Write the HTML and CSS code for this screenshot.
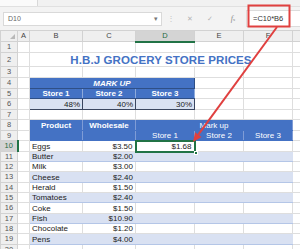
FILE: index.html
```html
<!DOCTYPE html>
<html>
<head>
<meta charset="utf-8">
<link rel="stylesheet" href="styles.css">
</head>
<body>
<div class="app">
  <div class="ribbon"><span class="rib-left"></span></div>
  <div class="fbar">
    <div class="namebox"><span>D10</span><span class="dd">&#9662;</span></div>
    <span class="sep">&#8942;</span>
    <span class="ic">&#10005;</span>
    <span class="ic">&#10003;</span>
    <span class="ic fx"><i>f</i><span class="fxx">x</span></span>
    <div class="finput">=C10*B6</div>
  </div>
  <table class="sheet">
    <colgroup>
      <col class="c-rh"><col class="c-a"><col class="c-b"><col class="c-c"><col class="c-d"><col class="c-e"><col class="c-f"><col class="c-g">
    </colgroup>
    <tr class="h11 colhdr"><th class="corner"><span class="tri"></span></th><th>A</th><th>B</th><th>C</th><th class="sel-col">D</th><th>E</th><th>F</th><th></th></tr>
    <tr class="h11"><th>1</th><td></td><td></td><td></td><td></td><td></td><td></td><td></td></tr>
    <tr class="h14"><th>2</th><td></td><td colspan="5" class="title">H.B.J GROCERY STORE PRICES</td><td></td></tr>
    <tr class="h11"><th>3</th><td></td><td></td><td></td><td></td><td></td><td></td><td></td></tr>
    <tr class="h11"><th>4</th><td></td><td colspan="3" class="mu-head">MARK UP</td><td></td><td></td><td></td></tr>
    <tr class="h10"><th>5</th><td></td><td class="mu-sub">Store 1</td><td class="mu-sub">Store 2</td><td class="mu-sub">Store 3</td><td></td><td></td><td></td></tr>
    <tr class="h11"><th>6</th><td></td><td class="mu-val">48%</td><td class="mu-val">40%</td><td class="mu-val">30%</td><td></td><td></td><td></td></tr>
    <tr class="h10"><th>7</th><td></td><td></td><td></td><td></td><td></td><td></td><td></td></tr>
    <tr class="h11"><th>8</th><td></td><td class="hd">Product</td><td class="hd">Wholesale</td><td colspan="3" class="hd hd-mk">Mark up</td><td></td></tr>
    <tr class="h10"><th>9</th><td></td><td class="hd"></td><td class="hd"></td><td class="hd hd2">Store 1</td><td class="hd hd2">Store 2</td><td class="hd hd2">Store 3</td><td></td></tr>
    <tr class="h11"><th class="sel-row">10</th><td></td><td class="p">Eggs</td><td class="n">$3.50</td><td class="n active"><div class="act">$1.68<span class="handle"></span></div></td><td></td><td></td><td></td></tr>
    <tr class="h10 band"><th>11</th><td></td><td class="p">Butter</td><td class="n">$2.00</td><td></td><td></td><td></td><td></td></tr>
    <tr class="h10"><th>12</th><td></td><td class="p">Milk</td><td class="n">$3.00</td><td></td><td></td><td></td><td></td></tr>
    <tr class="h11 band"><th>13</th><td></td><td class="p">Cheese</td><td class="n">$2.40</td><td></td><td></td><td></td><td></td></tr>
    <tr class="h10"><th>14</th><td></td><td class="p">Herald</td><td class="n">$1.50</td><td></td><td></td><td></td><td></td></tr>
    <tr class="h10 band"><th>15</th><td></td><td class="p">Tomatoes</td><td class="n">$2.40</td><td></td><td></td><td></td><td></td></tr>
    <tr class="h11"><th>16</th><td></td><td class="p">Coke</td><td class="n">$1.50</td><td></td><td></td><td></td><td></td></tr>
    <tr class="h10 band"><th>17</th><td></td><td class="p">Fish</td><td class="n">$10.90</td><td></td><td></td><td></td><td></td></tr>
    <tr class="h10"><th>18</th><td></td><td class="p">Chocolate</td><td class="n">$1.20</td><td></td><td></td><td></td><td></td></tr>
    <tr class="h11 band"><th>19</th><td></td><td class="p">Pens</td><td class="n">$4.00</td><td></td><td></td><td></td><td></td></tr>
    <tr class="h11"><th>20</th><td></td><td></td><td></td><td></td><td></td><td></td><td></td></tr>
  </table>
</div>
<svg class="overlay" width="300" height="249" viewBox="0 0 300 249">
  <rect x="248.5" y="5.5" width="41" height="21" fill="none" stroke="#e0403f" stroke-width="2"/>
  <line x1="277" y1="27" x2="198.3" y2="134.7" stroke="#e0403f" stroke-width="2"/>
  <polygon points="193,142 201.5,137.1 195.1,132.3" fill="#e0403f"/>
</svg>
</body>
</html>
```
FILE: styles.css
```css
* { box-sizing: border-box; }
html, body { margin: 0; padding: 0; }
body {
  width: 300px;
  height: 249px;
  overflow: hidden;
  background: #ffffff;
  font-family: "Liberation Sans", Arial, sans-serif;
  position: relative;
}
.app { display: flex; flex-direction: column; }

.ribbon {
  height: 7px;
  background: #f1f1f1;
  border-bottom: 1px solid #e0e0e0;
  display: flex;
}
.rib-left { width: 38px; background: #fafafa; border-right: 1px solid #d8d8d8; }

.fbar {
  height: 23px;
  background: #f3f3f3;
  display: flex;
  align-items: center;
}
.namebox {
  margin-left: 3px;
  width: 159px;
  height: 14px;
  background: #fff;
  border: 1px solid #d9d9d9;
  display: flex;
  align-items: center;
  justify-content: space-between;
  padding: 0 3px 0 4px;
  font-size: 7px;
  color: #666;
}
.dd { font-size: 7px; color: #777; }
.sep { width: 18px; text-align: center; color: #c4c4c4; font-size: 8px; }
.ic { width: 20px; text-align: center; color: #b3b3b3; font-size: 7px; }
.fx { width: 26px; color: #8a8a8a; font-family: "Liberation Serif", serif; font-size: 8px; }
.fxx { font-size: 5px; }
.finput {
  flex: 1;
  height: 17px;
  background: #fff;
  border: 1px solid #dcdcdc;
  border-right: none;
  font-size: 7.5px;
  color: #333;
  padding-left: 6px;
  display: flex;
  align-items: center;
}

.sheet {
  border-collapse: collapse;
  table-layout: fixed;
  width: 312px;
  font-size: 8px;
  color: #222;
}
.c-rh { width: 17px; }
.c-a { width: 12px; }
.c-b { width: 53px; }
.c-c { width: 53px; }
.c-d { width: 59px; }
.c-e { width: 49px; }
.c-f { width: 49px; }
.c-g { width: 20px; }

.sheet td, .sheet th {
  padding: 0 2px;
  border: 1px solid #dedede;
  line-height: 8px;
  white-space: nowrap;
  overflow: hidden;
  vertical-align: bottom;
}
.h10 td, .h10 th { height: 10px; }
.h11 td, .h11 th { height: 11px; }
.h14 td, .h14 th { height: 14px; }

.sheet th {
  background: #efefef;
  color: #555;
  font-weight: normal;
  text-align: center;
  vertical-align: middle;
  border-color: #d2d2d2;
  font-size: 7.5px;
}
.colhdr th { color: #444; }
.corner { position: relative; }
.tri {
  position: absolute;
  right: 2px;
  bottom: 2px;
  width: 0; height: 0;
  border-left: 5px solid transparent;
  border-bottom: 5px solid #b9b9b9;
}
.sheet th.sel-col {
  background: #d4d4d4;
  color: #1e6b3f;
  border-bottom: 2px solid #217346;
}
.sheet th.sel-row {
  background: #d4d4d4;
  color: #1e6b3f;
  border-right: 2px solid #217346;
}

.sheet td.title {
  text-align: center;
  vertical-align: middle;
  font-size: 11.5px;
  font-weight: bold;
  color: #4472c4;
  line-height: 12px;
  letter-spacing: 0.1px;
}

.sheet td.mu-head {
  background: #4472c4;
  color: #fff;
  font-weight: bold;
  font-style: italic;
  text-align: center;
  border: 1px solid #2f4f86;
}
.sheet td.mu-sub {
  background: #4472c4;
  color: #fff;
  font-weight: bold;
  text-align: center;
  border: 1px solid #2f4f86;
  border-left-color: #8eaadb;
  border-right-color: #8eaadb;
}
.sheet td.mu-val {
  background: #d9e1f2;
  text-align: right;
  border: 1px solid #3a4660;
}

.sheet td.hd {
  background: #4472c4;
  color: #fff;
  font-weight: bold;
  text-align: center;
  border: 1px solid #4472c4;
  border-left-color: #7f9cd6;
  border-right-color: #7f9cd6;
}
.sheet td.hd-mk { font-weight: normal; }
.sheet td.hd2 { font-weight: normal; }

.sheet td.p { text-align: left; }
.sheet td.n { text-align: right; }

.band td {
  background: #d9e1f2;
  border-top-color: #b4c6e7;
  border-bottom-color: #b4c6e7;
  border-left-color: #d9e1f2;
  border-right-color: #d9e1f2;
}
.band td:first-of-type { background: #fff; border-color: #dedede; }
.band td:last-child { background: #fff; border-color: #dedede; }

.sheet td.active {
  border: 2px solid #217346;
  padding: 0;
  overflow: visible;
}
.act {
  position: relative;
  padding: 0 2px;
  text-align: right;
}
.handle {
  position: absolute;
  right: -4px;
  bottom: -4px;
  width: 4px;
  height: 4px;
  background: #217346;
  border: 1px solid #fff;
}

.overlay {
  position: absolute;
  left: 0;
  top: 0;
  pointer-events: none;
}
```
